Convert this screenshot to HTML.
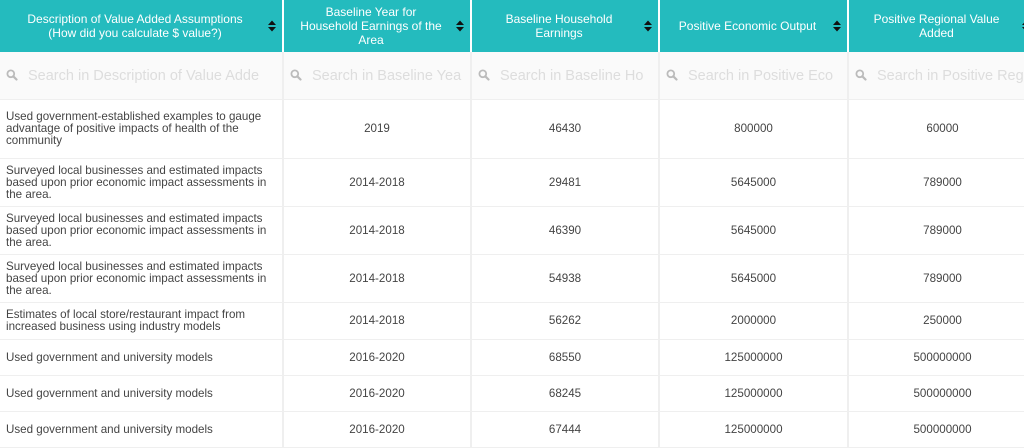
<!DOCTYPE html>
<html><head><meta charset="utf-8"><style>
body{margin:0;width:1024px;height:441px;overflow:hidden;background:#fff;font-family:"Liberation Sans",sans-serif;}
table{border-collapse:collapse;table-layout:fixed;width:1037px;position:absolute;left:0;top:0;}
th{background:#24bbbe;color:#fff;font-weight:normal;font-size:12px;line-height:14px;height:51px;padding:0 18px 0 6px;border-right:2px solid #fff;border-top:1px solid #24bbbe;position:relative;text-align:center;box-sizing:border-box}
th svg{position:absolute;right:5px;top:50%;margin-top:-6px}
td{border-right:2px solid #efefef;border-bottom:1px solid #efefef;font-size:11.6px;color:#444;text-align:center;padding:0 4px;box-sizing:border-box;line-height:12px}
td.l{text-align:left;padding-left:6px}
tr.f td{background:#fafafa;height:48px;color:#ddd;font-size:14.5px;text-align:left;white-space:nowrap;overflow:hidden;padding-left:6px}
tr.f td svg{vertical-align:-1px;margin-right:10px}
</style></head><body>
<svg width="0" height="0" style="position:absolute"><defs>
<symbol id="s" viewBox="0 0 10 12"><path d="M1 5L5 0.5L9 5Z M1 7L5 11.5L9 7Z" fill="#111"/></symbol>
<symbol id="q" viewBox="0 0 12 12"><circle cx="4.8" cy="4.8" r="3.4" fill="none" stroke="#bbb" stroke-width="1.8"/><path d="M7.3 7.3L10.5 10.5" stroke="#bbb" stroke-width="2.2" stroke-linecap="round"/></symbol>
</defs></svg>
<table>
<colgroup><col style="width:283px"><col style="width:188px"><col style="width:188px"><col style="width:189px"><col style="width:189px"></colgroup>
<tr><th>Description of Value Added Assumptions<br>(How did you calculate $ value?)<svg width="10" height="12"><use href="#s"/></svg></th><th>Baseline Year for<br>Household Earnings of the<br>Area<svg width="10" height="12"><use href="#s"/></svg></th><th>Baseline Household<br>Earnings<svg width="10" height="12"><use href="#s"/></svg></th><th>Positive Economic Output<svg width="10" height="12"><use href="#s"/></svg></th><th>Positive Regional Value<br>Added<svg width="10" height="12"><use href="#s"/></svg></th></tr>
<tr class="f"><td><svg width="12" height="12"><use href="#q"/></svg>Search in Description of Value Adde</td><td><svg width="12" height="12"><use href="#q"/></svg>Search in Baseline Yea</td><td><svg width="12" height="12"><use href="#q"/></svg>Search in Baseline Ho</td><td><svg width="12" height="12"><use href="#q"/></svg>Search in Positive Eco</td><td><svg width="12" height="12"><use href="#q"/></svg>Search in Positive Reg</td></tr>
<tr style="height:59px"><td class="l">Used government-established examples to gauge advantage of positive impacts of health of the community</td><td>2019</td><td>46430</td><td>800000</td><td>60000</td></tr>
<tr style="height:48px"><td class="l">Surveyed local businesses and estimated impacts based upon prior economic impact assessments in the area.</td><td>2014-2018</td><td>29481</td><td>5645000</td><td>789000</td></tr>
<tr style="height:48px"><td class="l">Surveyed local businesses and estimated impacts based upon prior economic impact assessments in the area.</td><td>2014-2018</td><td>46390</td><td>5645000</td><td>789000</td></tr>
<tr style="height:48px"><td class="l">Surveyed local businesses and estimated impacts based upon prior economic impact assessments in the area.</td><td>2014-2018</td><td>54938</td><td>5645000</td><td>789000</td></tr>
<tr style="height:37px"><td class="l">Estimates of local store/restaurant impact from increased business using industry models</td><td>2014-2018</td><td>56262</td><td>2000000</td><td>250000</td></tr>
<tr style="height:36px"><td class="l">Used government and university models</td><td>2016-2020</td><td>68550</td><td>125000000</td><td>500000000</td></tr>
<tr style="height:36px"><td class="l">Used government and university models</td><td>2016-2020</td><td>68245</td><td>125000000</td><td>500000000</td></tr>
<tr style="height:36px"><td class="l">Used government and university models</td><td>2016-2020</td><td>67444</td><td>125000000</td><td>500000000</td></tr>
</table>
</body></html>
